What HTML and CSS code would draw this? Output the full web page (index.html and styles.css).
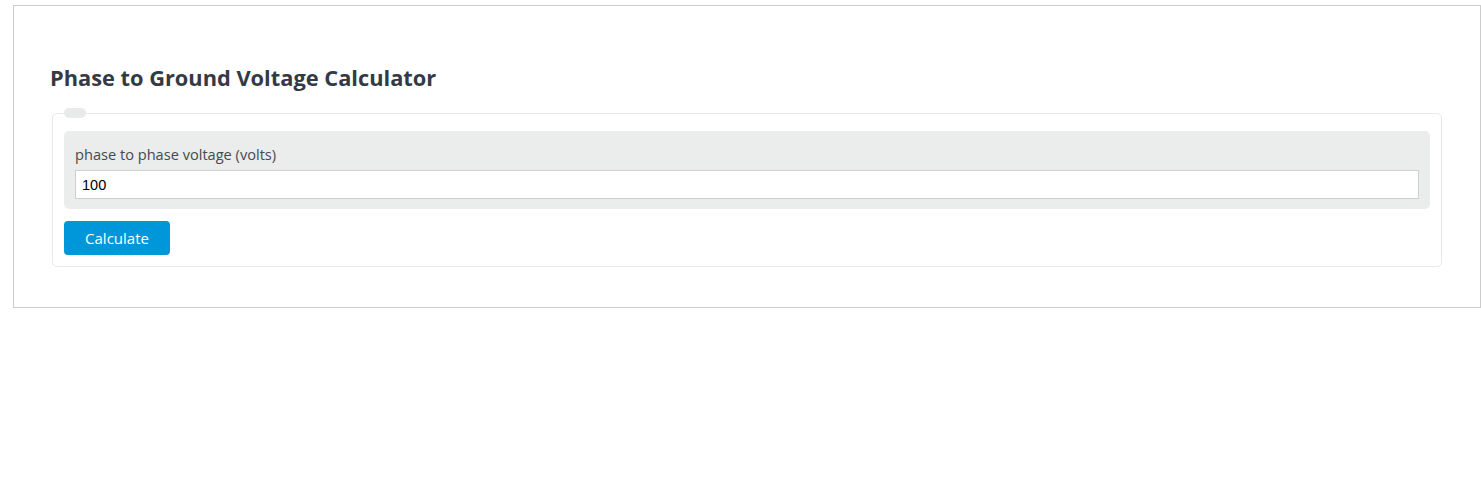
FILE: index.html
```html
<!DOCTYPE html>
<html lang="en">
<head>
<meta charset="utf-8">
<title>Phase to Ground Voltage Calculator</title>
<link rel="stylesheet" href="styles.css">
</head>
<body>
<div class="calc-box">
  <h2 class="calc-title">Phase to Ground Voltage Calculator</h2>
  <fieldset class="calc-fieldset">
    <legend class="calc-legend"></legend>
    <div class="calc-panel">
      <label class="calc-label" for="v">phase to phase voltage (volts)</label>
      <input class="calc-input" id="v" type="text" value="100">
    </div>
    <button class="calc-button" type="button">Calculate</button>
  </fieldset>
</div>
</body>
</html>
```

FILE: styles.css
```css
html, body {
  margin: 0;
  padding: 0;
  background: #ffffff;
}

body {
  font-family: "Open Sans", "Noto Sans", sans-serif;
  color: #333;
}

.calc-box {
  margin: 5px 0 0 13px;
  width: 1468px;
  box-sizing: border-box;
  border: 1px solid #cccccc;
  padding: 58px 38px 40px 38px;
}

.calc-title {
  margin: 0 0 16px -2px;
  font-size: 21.8px;
  line-height: 28px;
  font-weight: 700;
  color: #343a45;
}

.calc-fieldset {
  margin: 0;
  border: 1px solid #e8e8e8;
  border-radius: 5px;
  padding: 13px 11px 11px 11px;
  min-width: 0;
}

.calc-legend {
  padding: 0;
  margin-left: 0;
  width: 22px;
  height: 10px;
  border-radius: 5px;
  background: #e9eaea;
}

.calc-panel {
  background: #ebecec;
  border-radius: 5px;
  padding: 13px 11px 10px 11px;
  display: flex;
  flex-direction: column;
  gap: 6px;
}

.calc-label {
  font-size: 14.6px;
  line-height: 20px;
  color: #444a50;
}

.calc-input {
  height: 29px;
  box-sizing: border-box;
  border: 1px solid #cfcfcf;
  padding: 0 6px;
  font-family: "Liberation Sans", Arial, sans-serif;
  font-size: 14.5px;
  color: #000;
  background: #fff;
  margin: 0;
}

.calc-button {
  margin-top: 12px;
  width: 106px;
  height: 34px;
  border: none;
  border-radius: 4px;
  background: #0096da;
  color: #ffffff;
  font-family: "Open Sans", "Noto Sans", sans-serif;
  font-size: 15px;
  cursor: pointer;
  display: block;
}
```
